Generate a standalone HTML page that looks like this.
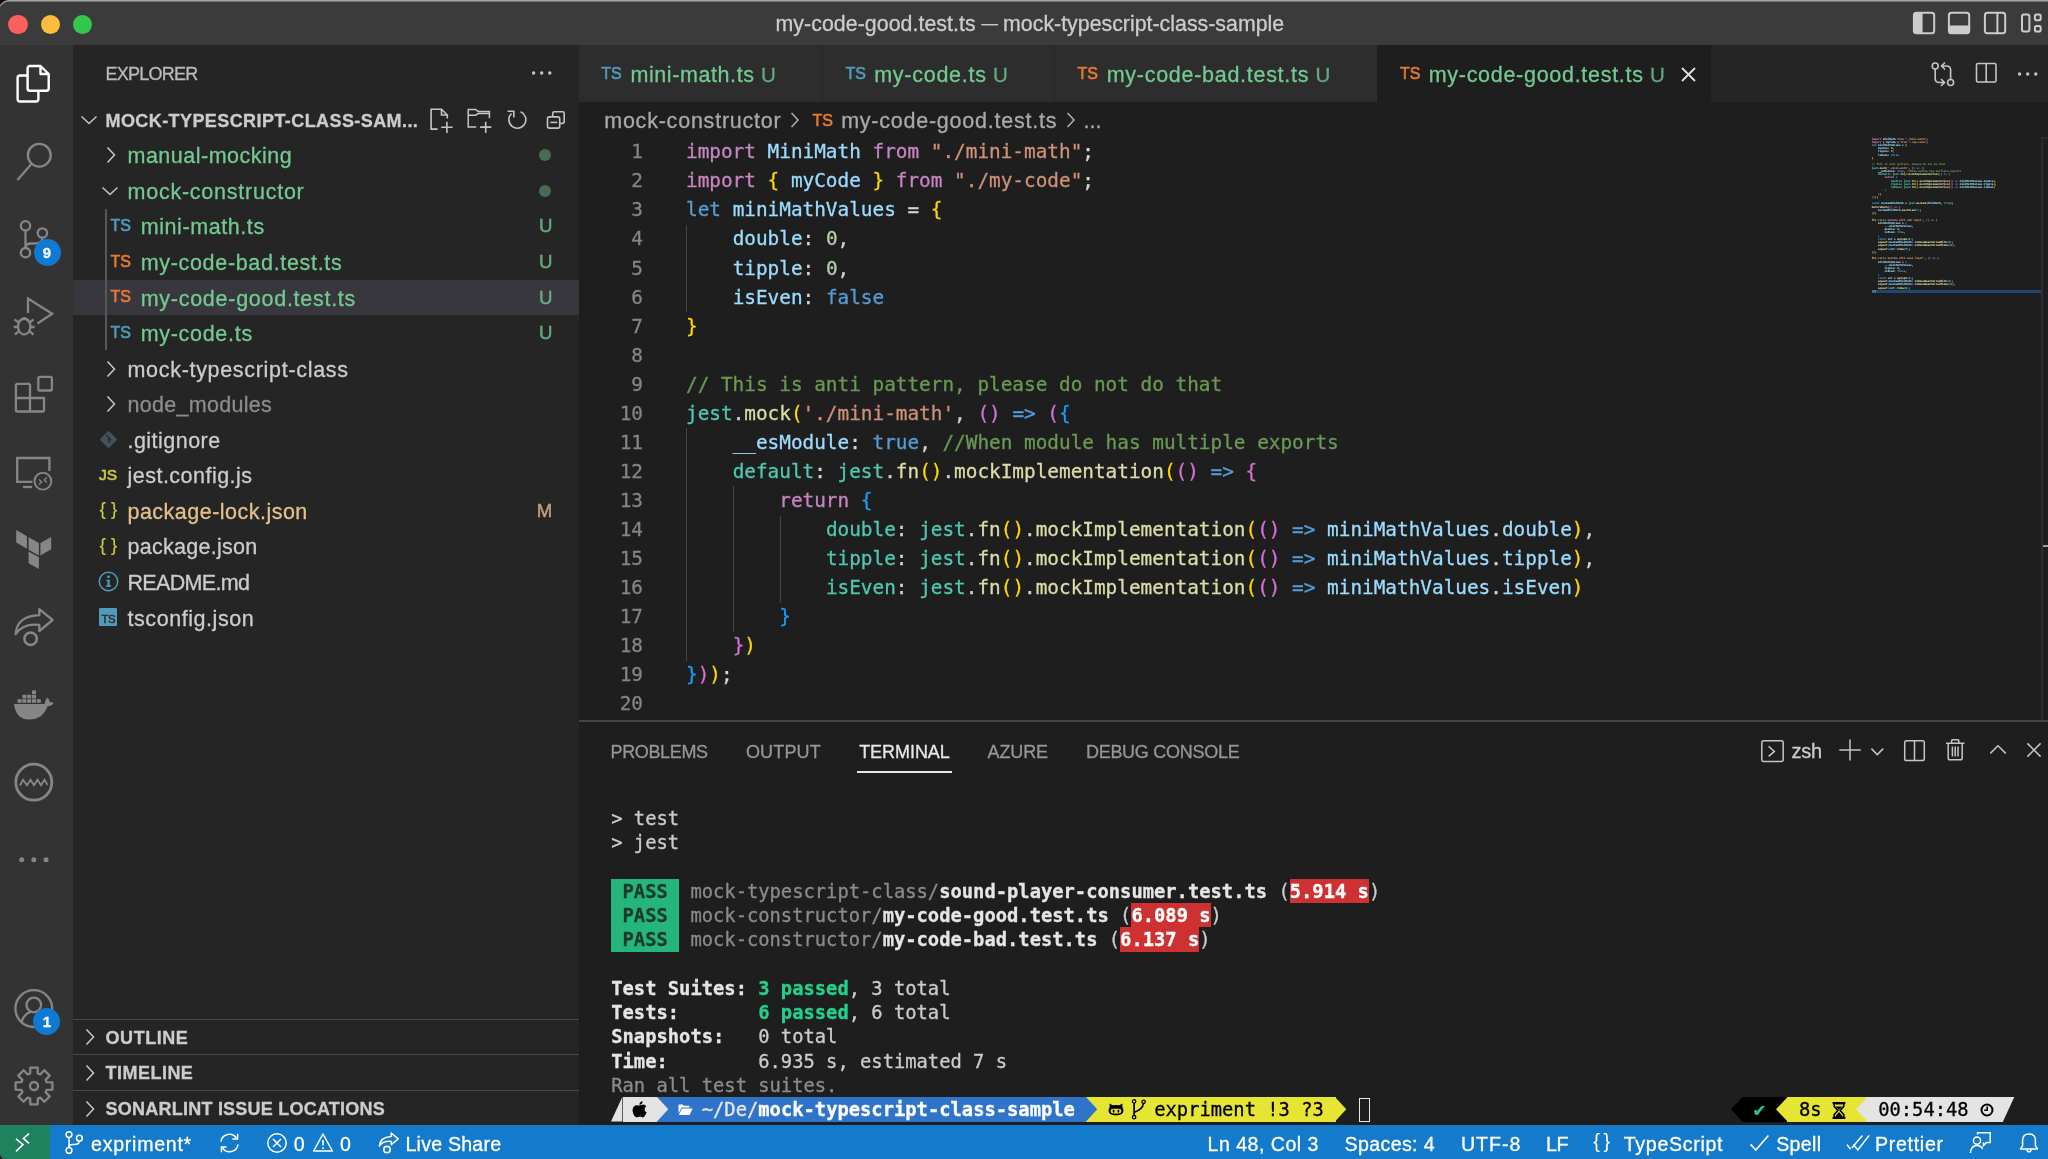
<!DOCTYPE html>
<html lang="en">
<head>
<meta charset="utf-8">
<title>my-code-good.test.ts — mock-typescript-class-sample</title>
<style>
*{box-sizing:border-box}
html,body{margin:0;padding:0}
body{width:2048px;height:1159px;overflow:hidden;background:#1e1e1e;position:relative;
 font-family:"Liberation Sans",sans-serif;color:#cccccc;-webkit-font-smoothing:antialiased}
.abs{position:absolute}
svg{display:block;overflow:visible}
#root{position:absolute;left:0;top:0;width:2048px;height:1159px;overflow:hidden;will-change:transform;-webkit-text-stroke:0.3px}
#code,.tline{-webkit-text-stroke:0.3px}
/* ---------- title bar ---------- */
#titlebar{position:absolute;left:-1.5px;top:0;width:2049.5px;height:45.4px;background:#3b3b3b;border-top-left-radius:10px;box-shadow:inset 0 1.5px 0.6px #a4a4a4}
#cornertl{position:absolute;left:0;top:0;width:14px;height:14px;background:#1a0b0b}
#cornerbl{position:absolute;left:0;top:1150px;width:9px;height:9px;background:#33231f}
#titlebar .topline{position:absolute;left:0;top:0;width:2048px;height:2px;background:linear-gradient(#8f8f8f,#5a5a5a)}
#title{position:absolute;left:1.5px;width:2048px;top:0;height:45px;line-height:49px;font-size:21.3px;color:#cccccc;white-space:nowrap}
#title span{position:absolute;top:0}
.tl{position:absolute;top:14.5px;width:19.4px;height:19.4px;border-radius:50%}
/* ---------- activity bar ---------- */
#activity{position:absolute;left:0;top:45px;width:73px;height:1081px;background:#333333}
#activity svg{position:absolute}
.badge{position:absolute;width:27px;height:27px;border-radius:50%;background:#0e7ad3;color:#fff;font-size:15px;font-weight:bold;text-align:center;line-height:27px}
/* ---------- sidebar ---------- */
#sidebar{position:absolute;left:73px;top:45px;width:506px;height:1081px;background:#252526}
.row{position:absolute;left:0;width:506px;height:36px;line-height:36px;font-size:21.5px;letter-spacing:.5px;white-space:nowrap;color:#cccccc}
.row .lbl{position:absolute;top:0}
.row .dec{position:absolute;top:-1px;font-size:18.6px;letter-spacing:0;opacity:.8;-webkit-text-stroke:0.5px}
.row .ts{position:absolute;top:-1.2px;font-size:16px;font-weight:normal;-webkit-text-stroke:0.6px;letter-spacing:0}
.g{color:#73c991}
.m{color:#e2c08d}
.ign{color:#8c8c8c}
.sect{position:absolute;left:0;width:506px;height:36px;border-top:1.6px solid #484848;line-height:37px;font-size:18px;font-weight:bold;letter-spacing:.4px;color:#cccccc}
.sect span{position:absolute;left:32px}
/* ---------- editor ---------- */
#tabs{position:absolute;left:579px;top:45px;width:1469px;height:56.8px;background:#252526}
.tab{position:absolute;top:0;height:56.8px;background:#2d2d2d;line-height:60.4px;font-size:21.5px;letter-spacing:.45px;color:#73c991;white-space:nowrap}
.tab.active{background:#1e1e1e}
.tab .ts{position:absolute;font-size:16px;font-weight:normal;-webkit-text-stroke:0.6px;letter-spacing:0;top:-0.7px}
.tab .lbl{position:absolute}
.blue{color:#519aba}
.orange{color:#e37933}
#crumbs{position:absolute;left:579px;top:101px;width:1469px;height:36px;line-height:40.4px;font-size:21.5px;letter-spacing:.35px;color:#a9a9a9;white-space:nowrap}
#crumbs span{position:absolute;top:0}
#code{position:absolute;left:579px;top:137px;width:1469px;height:583px;font-family:"DejaVu Sans Mono","Liberation Mono",monospace;font-size:19.37px;color:#d4d4d4}
.ln{position:absolute;left:0;width:64px;text-align:right;height:29px;line-height:29px;color:#858585;white-space:pre}
.cl{position:absolute;left:107px;height:29px;line-height:29px;white-space:pre}
.guide{position:absolute;width:1.2px;background:#444444}
.k{color:#c586c0}.v{color:#9cdcfe}.s{color:#ce9178}.b{color:#569cd6}.n{color:#b5cea8}.c{color:#6a9955}.f{color:#dcdcaa}.t{color:#4ec9b0}
.b1{color:#ffd700}.b2{color:#da70d6}.b3{color:#179fff}
/* ---------- panel ---------- */
#panel{position:absolute;left:579px;top:720px;width:1469px;height:406px;background:#1e1e1e}
#panel .pborder{position:absolute;left:0;top:0.3px;width:1469px;height:1.6px;background:#434343}
.ptab{position:absolute;top:14px;height:30px;line-height:30px;font-size:18px;letter-spacing:.1px;color:#969696;white-space:nowrap}
#term{position:absolute;left:32px;top:84px;font-family:"DejaVu Sans Mono","Liberation Mono",monospace;font-size:18.79px;color:#cccccc}
.tline{position:absolute;height:24.25px;line-height:24.25px;white-space:pre;font-family:"DejaVu Sans Mono","Liberation Mono",monospace;font-size:18.79px;color:#cccccc}
.dim{color:#8b8b8b}
.pass{background:#25b67b;color:#1e3a2c;font-weight:bold;display:inline-block;height:24.25px;vertical-align:top;margin-top:-.8px;padding-top:.8px}
.red{background:#cd3131;color:#ffffff;font-weight:bold;display:inline-block;height:24.25px;vertical-align:top;margin-top:-.8px;padding-top:.8px}
.bg{color:#23d18b;font-weight:bold}
.bw{color:#e5e5e5;font-weight:bold}
/* ---------- status bar ---------- */
#status{position:absolute;left:0;top:1124.7px;width:2048px;height:34.3px;background:#147acb;color:#ffffff;font-size:19.6px;line-height:38px;white-space:nowrap;border-bottom-left-radius:6px;overflow:hidden}
#status .it{position:absolute;top:0}
#remote{position:absolute;left:0;top:0;width:50.3px;height:35px;background:#1e825e}
</style>
</head>
<body>
<div id="root">

<!-- TITLE BAR -->
<div id="cornertl"></div><div id="cornerbl"></div>
<div id="titlebar">
  <div class="tl" style="left:9.7px;background:#fc605c"></div>
  <div class="tl" style="left:42px;background:#fdbc40"></div>
  <div class="tl" style="left:74.3px;background:#34c84a"></div>
  <div id="title"><span style="left:775.5px;letter-spacing:0.07px">my-code-good.test.ts</span><span style="left:981.6px;font-size:16.4px;top:-1px">—</span><span style="left:1003.1px;letter-spacing:0.02px">mock-typescript-class-sample</span></div>
<svg class="abs" style="left:1913.0px;top:10.5px" width="24" height="24" viewBox="0 0 24 24"><rect x="1.9" y="1.8" width="20.3" height="20.5" rx="2.6" fill="none" stroke="#cccccc" stroke-width="2"/><path d="M1.9 3.8 Q1.9 1.8 3.9 1.8 H10.6 V22.3 H3.9 Q1.9 22.3 1.9 20.3Z" fill="#cccccc"/></svg>
<svg class="abs" style="left:1948.5px;top:10.5px" width="24" height="24" viewBox="0 0 24 24"><rect x="1.9" y="1.8" width="20.3" height="20.5" rx="2.6" fill="none" stroke="#cccccc" stroke-width="2"/><path d="M1.9 14.6 H22.2 V20.3 Q22.2 22.3 20.2 22.3 H3.9 Q1.9 22.3 1.9 20.3Z" fill="#cccccc"/></svg>
<svg class="abs" style="left:1984.0px;top:10.5px" width="24" height="24" viewBox="0 0 24 24"><rect x="1.9" y="1.8" width="20.3" height="20.5" rx="2.6" fill="none" stroke="#cccccc" stroke-width="2"/><path d="M14.4 1.8 V22.3" stroke="#cccccc" stroke-width="2"/></svg>
<svg class="abs" style="left:2021.2px;top:10.5px" width="24" height="24" viewBox="0 0 24 24"><rect x="2" y="3.6" width="7.4" height="16.9" rx="2" fill="none" stroke="#cccccc" stroke-width="2"/><rect x="14.9" y="3.6" width="5.8" height="5.6" rx="1.8" fill="none" stroke="#cccccc" stroke-width="2"/><rect x="14.9" y="14.9" width="5.8" height="5.6" rx="1.8" fill="none" stroke="#cccccc" stroke-width="2"/></svg>
</div>

<!-- ACTIVITY BAR -->
<div id="activity">
<svg style="left:15px;top:18px" width="38" height="42" viewBox="0 0 38 42"><path d="M12.6 12.5 H5 Q2.6 12.5 2.6 15 V36 Q2.6 38.5 5 38.5 H21 Q23.4 38.5 23.4 36 V28.8" fill="none" stroke="#fff" stroke-width="2.4"/><path d="M25.5 3 H15 Q12.6 3 12.6 5.5 V25.5 Q12.6 27.8 15 27.8 H31.3 Q33.7 27.8 33.7 25.5 V11 Z M25.5 3 V11 H33.7" fill="none" stroke="#fff" stroke-width="2.4" stroke-linejoin="round"/></svg>
<svg style="left:14px;top:95px" width="42" height="44" viewBox="0 0 42 44"><circle cx="25.3" cy="15.2" r="11.4" fill="none" stroke="#868686" stroke-width="2.3"/><path d="M17.6 23.8 L3.4 40" stroke="#868686" stroke-width="2.3" fill="none"/></svg>
<svg style="left:14px;top:171px" width="42" height="46" viewBox="0 0 42 46"><circle cx="11.5" cy="9.8" r="4.7" fill="none" stroke="#868686" stroke-width="2.3"/><circle cx="11.5" cy="36.7" r="4.7" fill="none" stroke="#868686" stroke-width="2.3"/><circle cx="28.4" cy="17" r="4.7" fill="none" stroke="#868686" stroke-width="2.3"/><path d="M11.5 14.5 V32 M28.4 21.7 Q28.4 27.5 21 27.5 H17 Q11.5 27.5 11.5 32" fill="none" stroke="#868686" stroke-width="2.3"/></svg>
<div class="badge" style="left:33.5px;top:193.5px">9</div>
<svg style="left:12px;top:249px" width="44" height="46" viewBox="0 0 44 46"><path d="M16 19 V4.6 L40.2 19.8 L25.5 29.5" fill="none" stroke="#868686" stroke-width="2.3" stroke-linejoin="miter"/><ellipse cx="12.2" cy="32.6" rx="6.2" ry="7.8" fill="none" stroke="#868686" stroke-width="2.3"/><path d="M7 28.5 L2.5 25.5 M17.4 28.5 L21.5 25.5 M6.6 33 H1.8 M17.8 33 H22.6 M7 37 L3 40.6 M17.4 37 L21.4 40.6 M8 26.5 Q12.2 22 16.4 26.5" fill="none" stroke="#868686" stroke-width="2.3"/></svg>
<svg style="left:13px;top:329px" width="42" height="42" viewBox="0 0 42 42"><path d="M17 9.9 H4.4 Q2.9 9.9 2.9 11.4 V36 Q2.9 37.5 4.4 37.5 H29.5 Q31 37.5 31 36 V24 H2.9 M17 9.9 V37.5" fill="none" stroke="#868686" stroke-width="2.3"/><rect x="25.3" y="2.9" width="13.6" height="13.6" rx="1.5" fill="none" stroke="#868686" stroke-width="2.3"/></svg>
<svg style="left:14px;top:409px" width="42" height="40" viewBox="0 0 42 40"><path d="M18.5 27.9 H3.2 V4 H35.4 V17" fill="none" stroke="#868686" stroke-width="2.3"/><path d="M9 33 H18" stroke="#868686" stroke-width="2.3"/><circle cx="28.9" cy="27.2" r="8.4" fill="none" stroke="#868686" stroke-width="1.9"/><path d="M25 25.5 L27.6 28 L25 30.5 M32.8 23.6 L30.2 26.1 L32.8 28.6" fill="none" stroke="#868686" stroke-width="1.4"/></svg>
<svg style="left:0px;top:475px" width="60" height="56" viewBox="0 0 60 56"><path d="M16.2 10.1 L26.9 16.3 V28.7 L16.2 22.5Z M28.6 17.3 L38.9 23.1 V35.6 L28.6 29.8Z M40.4 23.1 L51.2 16.9 V29.3 L40.4 35.6Z M28.6 31.4 L38.9 37.2 V49 L28.6 43.2Z" fill="#868686"/></svg>
<svg style="left:12px;top:559px" width="44" height="46" viewBox="0 0 44 46"><path d="M27.3 5.2 L40.6 16 L27.3 27 V20.8 Q11 19 3.6 30 Q5 12 27.3 11.2 Z" fill="none" stroke="#868686" stroke-width="2.3" stroke-linejoin="round"/><circle cx="18.6" cy="34.8" r="6.2" fill="none" stroke="#868686" stroke-width="2.6"/></svg>
<svg style="left:12px;top:643px" width="44" height="36" viewBox="0 0 44 36"><path d="M2 16 H32.5 Q33 11.5 35.6 9.5 Q38 12 37.5 14.2 Q40 13.6 41.5 15 Q39.5 18.5 35.5 18.3 Q31 31.5 17 31.5 Q4 31.5 2 16Z" fill="#868686"/><g fill="#868686"><rect x="5.6" y="11.2" width="4" height="3.6"/><rect x="10.4" y="11.2" width="4" height="3.6"/><rect x="15.2" y="11.2" width="4" height="3.6"/><rect x="20" y="11.2" width="4" height="3.6"/><rect x="24.8" y="11.2" width="4" height="3.6"/><rect x="10.4" y="6.8" width="4" height="3.6"/><rect x="15.2" y="6.8" width="4" height="3.6"/><rect x="20" y="6.8" width="4" height="3.6"/><rect x="20" y="2.4" width="4" height="3.6"/></g></svg>
<svg style="left:12px;top:715px" width="44" height="44" viewBox="0 0 44 44"><circle cx="21.8" cy="22.2" r="18" fill="none" stroke="#868686" stroke-width="2.8"/><path d="M8 25.5 L11 19.8 L15 25.3 L18.5 19.8 L22 25.3 L25.5 19.8 L29 25.3 L32.5 19.8 L35.6 25" fill="none" stroke="#868686" stroke-width="1.8"/></svg>
<svg style="left:14px;top:807px" width="40" height="16" viewBox="0 0 40 16"><circle cx="7.7" cy="7.7" r="2.5" fill="#868686"/><circle cx="19.8" cy="7.7" r="2.5" fill="#868686"/><circle cx="32" cy="7.7" r="2.5" fill="#868686"/></svg>
<svg style="left:12px;top:941px" width="44" height="44" viewBox="0 0 44 44"><circle cx="21.8" cy="22.6" r="18.4" fill="none" stroke="#868686" stroke-width="2.3"/><circle cx="21.8" cy="19" r="7.3" fill="none" stroke="#868686" stroke-width="2.3"/><path d="M9.6 36 Q12 27.6 18.6 25.8 M25 25.8 Q31.6 27.6 34 36" fill="none" stroke="#868686" stroke-width="2.3"/></svg>
<div class="badge" style="left:33.4px;top:963.0px">1</div>
<svg style="left:11.8px;top:1019.2px" width="44" height="44" viewBox="0 0 44 44"><path d="M18.2 9.4 L18.3 3.6 L25.7 3.6 L25.8 9.4 L28.3 10.4 L32.4 6.3 L37.7 11.6 L33.6 15.7 L34.6 18.2 L40.4 18.3 L40.4 25.7 L34.6 25.8 L33.6 28.3 L37.7 32.4 L32.4 37.7 L28.3 33.6 L25.8 34.6 L25.7 40.4 L18.3 40.4 L18.2 34.6 L15.7 33.6 L11.6 37.7 L6.3 32.4 L10.4 28.3 L9.4 25.8 L3.6 25.7 L3.6 18.3 L9.4 18.2 L10.4 15.7 L6.3 11.6 L11.6 6.3 L15.7 10.4Z" fill="none" stroke="#868686" stroke-width="2.3" stroke-linejoin="round"/><circle cx="22" cy="22" r="4" fill="none" stroke="#868686" stroke-width="2.3"/></svg>
</div>

<!-- SIDEBAR -->
<div id="sidebar">
<div class="abs" style="left:32.5px;top:10px;height:36px;line-height:39.6px;font-size:18px;letter-spacing:-.75px;color:#bbbbbb">EXPLORER</div>
<svg class="abs" style="left:458px;top:25px" width="22" height="6" viewBox="0 0 22 6"><circle cx="2.6" cy="3" r="1.7" fill="#c5c5c5"/><circle cx="10.7" cy="3" r="1.7" fill="#c5c5c5"/><circle cx="18.8" cy="3" r="1.7" fill="#c5c5c5"/></svg>
<svg class="abs" style="left:6.0px;top:67.0px" width="20" height="16" viewBox="0 0 20 16"><path d="M2.5 4.5 L10 11.5 L17.5 4.5" fill="none" stroke="#c5c5c5" stroke-width="1.55"/></svg>
<div class="abs" style="left:32.5px;top:57px;height:36px;line-height:38px;font-size:18px;font-weight:bold;letter-spacing:.42px;color:#cccccc;white-space:nowrap">MOCK-TYPESCRIPT-CLASS-SAM...</div>
<svg class="abs" style="left:357px;top:62px" width="24" height="27" viewBox="0 0 24 27"><path d="M7.6 22.1 H1.1 V2.3 H11.5 L17.3 8 V11.6 M11.5 2.3 V8 H17.3" fill="none" stroke="#c5c5c5" stroke-width="1.6"/><path d="M11.2 20.2 H22.6 M16.9 14.8 V26" fill="none" stroke="#c5c5c5" stroke-width="1.6"/></svg>
<svg class="abs" style="left:394px;top:62px" width="26" height="27" viewBox="0 0 26 27"><path d="M9.2 20.1 H1.2 V2.4 H8.6 L11.2 4.4 H22.4 V11.2 M1.2 8.2 H8.6 L11.2 6.6 H22.4" fill="none" stroke="#c5c5c5" stroke-width="1.5"/><path d="M13.1 20.1 H24.3 M18.7 14.8 V26" fill="none" stroke="#c5c5c5" stroke-width="1.6"/></svg>
<svg class="abs" style="left:433px;top:63px" width="22" height="24" viewBox="0 0 22 24"><path d="M14.6 3.8 A8.5 8.5 0 1 1 5.4 5.6" fill="none" stroke="#c5c5c5" stroke-width="1.6"/><path d="M1.6 3.2 H7.8 V9.4" fill="none" stroke="#c5c5c5" stroke-width="1.6"/></svg>
<svg class="abs" style="left:472px;top:64px" width="22" height="22" viewBox="0 0 22 22"><path d="M7.7 7.4 V4.4 Q7.7 2.8 9.3 2.8 H17.6 Q19.2 2.8 19.2 4.4 V12.8 Q19.2 14.4 17.6 14.4 H15.2" fill="none" stroke="#c5c5c5" stroke-width="1.6"/><rect x="2.5" y="7.9" width="12.2" height="11.2" rx="1.8" fill="none" stroke="#c5c5c5" stroke-width="1.6"/><path d="M5.4 13.4 H12.2" stroke="#c5c5c5" stroke-width="1.6"/></svg>
<div class="row" style="top:92.2px;height:35.56px;line-height:38.96px;"><svg class="abs" style="left:29.5px;top:8.3px" width="16" height="20" viewBox="0 0 16 20"><path d="M4.5 2.5 L11.5 10 L4.5 17.5" fill="none" stroke="#c5c5c5" stroke-width="1.55"/></svg><span class="lbl g" style="left:54.5px;letter-spacing:0.50px">manual-mocking</span><div class="abs" style="left:465.70000000000005px;top:11.780000000000001px;width:12px;height:12px;border-radius:50%;background:#73c991;opacity:.43"></div></div>
<div class="row" style="top:127.8px;height:35.56px;line-height:38.96px;"><svg class="abs" style="left:27.0px;top:10.3px" width="20" height="16" viewBox="0 0 20 16"><path d="M2.5 4.5 L10 11.5 L17.5 4.5" fill="none" stroke="#c5c5c5" stroke-width="1.55"/></svg><span class="lbl g" style="left:54.5px;letter-spacing:0.76px">mock-constructor</span><div class="abs" style="left:465.70000000000005px;top:11.780000000000001px;width:12px;height:12px;border-radius:50%;background:#73c991;opacity:.43"></div></div>
<div class="row" style="top:163.3px;height:35.56px;line-height:38.96px;"><span class="ts blue" style="left:37.5px">TS</span><span class="lbl g" style="left:67.7px;letter-spacing:0.58px">mini-math.ts</span><span class="dec g" style="left:465.9px">U</span></div>
<div class="row" style="top:198.9px;height:35.56px;line-height:38.96px;"><span class="ts orange" style="left:37.5px">TS</span><span class="lbl g" style="left:67.7px;letter-spacing:0.68px">my-code-bad.test.ts</span><span class="dec g" style="left:465.9px">U</span></div>
<div class="row" style="top:234.5px;height:35.56px;line-height:38.96px;background:#37373d;"><span class="ts orange" style="left:37.5px">TS</span><span class="lbl g" style="left:67.7px;letter-spacing:0.73px">my-code-good.test.ts</span><span class="dec g" style="left:465.9px">U</span></div>
<div class="row" style="top:270.0px;height:35.56px;line-height:38.96px;"><span class="ts blue" style="left:37.5px">TS</span><span class="lbl g" style="left:67.7px;letter-spacing:0.70px">my-code.ts</span><span class="dec g" style="left:465.9px">U</span></div>
<div class="row" style="top:305.6px;height:35.56px;line-height:38.96px;"><svg class="abs" style="left:29.5px;top:8.3px" width="16" height="20" viewBox="0 0 16 20"><path d="M4.5 2.5 L11.5 10 L4.5 17.5" fill="none" stroke="#c5c5c5" stroke-width="1.55"/></svg><span class="lbl " style="left:54.5px;letter-spacing:0.69px">mock-typescript-class</span></div>
<div class="row" style="top:341.1px;height:35.56px;line-height:38.96px;"><svg class="abs" style="left:29.5px;top:8.3px" width="16" height="20" viewBox="0 0 16 20"><path d="M4.5 2.5 L11.5 10 L4.5 17.5" fill="none" stroke="#c5c5c5" stroke-width="1.55"/></svg><span class="lbl ign" style="left:54.5px;letter-spacing:0.29px">node_modules</span></div>
<div class="row" style="top:376.7px;height:35.56px;line-height:38.96px;"><svg class="abs" style="left:25.5px;top:8.280000000000001px" width="19" height="19" viewBox="0 0 19 19"><rect x="3.2" y="3.2" width="12.6" height="12.6" rx="1.5" transform="rotate(45 9.5 9.5)" fill="#41535b"/><path d="M7.2 5 L9.8 7.6 V13 M9.8 8 L12.2 10.4" stroke="#252526" stroke-width="1.3" fill="none"/></svg><span class="lbl " style="left:54.5px;letter-spacing:0.47px">.gitignore</span></div>
<div class="row" style="top:412.3px;height:35.56px;line-height:38.96px;"><span class="ts" style="left:26px;color:#cbcb41;font-size:15.5px;top:-1px">JS</span><span class="lbl " style="left:54.5px;letter-spacing:0.48px">jest.config.js</span></div>
<div class="row" style="top:447.8px;height:35.56px;line-height:38.96px;"><span class="ts" style="left:26.400000000000006px;color:#cbcb41;font-size:19px;font-weight:normal;top:-2.5px;letter-spacing:5.2px;-webkit-text-stroke:0.1px">{}</span><span class="lbl m" style="left:54.5px;letter-spacing:0.48px">package-lock.json</span><span class="dec m" style="left:463.79999999999995px">M</span></div>
<div class="row" style="top:483.4px;height:35.56px;line-height:38.96px;"><span class="ts" style="left:26.400000000000006px;color:#cbcb41;font-size:19px;font-weight:normal;top:-2.5px;letter-spacing:5.2px;-webkit-text-stroke:0.1px">{}</span><span class="lbl " style="left:54.5px;letter-spacing:0.27px">package.json</span></div>
<div class="row" style="top:518.9px;height:35.56px;line-height:38.96px;"><svg class="abs" style="left:25px;top:7.280000000000001px" width="21" height="21" viewBox="0 0 21 21"><circle cx="10.5" cy="10.5" r="9.2" fill="none" stroke="#519aba" stroke-width="1.5"/><rect x="9.5" y="8.8" width="2.2" height="6.8" fill="#519aba"/><rect x="8.3" y="8.8" width="3" height="1.4" fill="#519aba"/><rect x="8" y="14.4" width="5.2" height="1.4" fill="#519aba"/><circle cx="10.5" cy="5.8" r="1.4" fill="#519aba"/></svg><span class="lbl " style="left:54.5px;letter-spacing:-0.68px">README.md</span></div>
<div class="row" style="top:554.5px;height:35.56px;line-height:38.96px;"><div class="abs" style="left:26px;top:8.780000000000001px;width:17.6px;height:17.6px;background:#519aba;border-radius:1px;color:#252526;font-size:11.4px;font-weight:normal;letter-spacing:-.5px;line-height:23.5px;text-align:right;padding-right:1.6px;-webkit-text-stroke:0.35px">TS</div><span class="lbl " style="left:54.5px;letter-spacing:0.56px">tsconfig.json</span></div>
<div class="abs" style="left:32.2px;top:163.8px;width:1.5px;height:141.59999999999997px;background:#585858"></div>
<div class="sect" style="top:973.5px"><svg class="abs" style="left:8.5px;top:7.8px" width="16" height="20" viewBox="0 0 16 20"><path d="M4.5 2.5 L11.5 10 L4.5 17.5" fill="none" stroke="#c5c5c5" stroke-width="1.55"/></svg><span style="left:32.6px;letter-spacing:0.53px">OUTLINE</span></div>
<div class="sect" style="top:1009.1px"><svg class="abs" style="left:8.5px;top:7.8px" width="16" height="20" viewBox="0 0 16 20"><path d="M4.5 2.5 L11.5 10 L4.5 17.5" fill="none" stroke="#c5c5c5" stroke-width="1.55"/></svg><span style="left:32.6px;letter-spacing:0.47px">TIMELINE</span></div>
<div class="sect" style="top:1044.8px"><svg class="abs" style="left:8.5px;top:7.8px" width="16" height="20" viewBox="0 0 16 20"><path d="M4.5 2.5 L11.5 10 L4.5 17.5" fill="none" stroke="#c5c5c5" stroke-width="1.55"/></svg><span style="left:32.6px;letter-spacing:0.23px">SONARLINT ISSUE LOCATIONS</span></div>
</div>

<!-- EDITOR -->
<div id="tabs">
<div class="tab" style="left:0px;width:243px"><span class="ts blue" style="left:22.25px">TS</span><span class="lbl" style="left:51.45px;letter-spacing:0.59px">mini-math.ts</span><span class="lbl" style="left:181.9px;opacity:.8;letter-spacing:0;font-size:20.5px">U</span></div>
<div class="tab" style="left:244px;width:231.29999999999995px"><span class="ts blue" style="left:22.5px">TS</span><span class="lbl" style="left:51.2px;letter-spacing:0.74px">my-code.ts</span><span class="lbl" style="left:169.9px;opacity:.8;letter-spacing:0;font-size:20.5px">U</span></div>
<div class="tab" style="left:476.29999999999995px;width:321.45000000000005px"><span class="ts orange" style="left:22.200000000000045px">TS</span><span class="lbl" style="left:51.40000000000005px;letter-spacing:0.72px">my-code-bad.test.ts</span><span class="lbl" style="left:260.1px;opacity:.8;letter-spacing:0;font-size:20.5px">U</span></div>
<div class="tab active" style="left:798px;width:334px"><span class="ts orange" style="left:23px">TS</span><span class="lbl" style="left:51.7px;letter-spacing:0.71px">my-code-good.test.ts</span><span class="lbl" style="left:272.9px;opacity:.8;letter-spacing:0;font-size:20.5px">U</span><svg class="abs" style="left:303px;top:21px" width="17" height="17" viewBox="0 0 17 17"><path d="M2 2 L15 15 M15 2 L2 15" stroke="#e0e0e0" stroke-width="1.8"/></svg></div>
<svg class="abs" style="left:1351px;top:16px" width="26" height="27" viewBox="0 0 26 27"><circle cx="5.2" cy="5" r="3" fill="none" stroke="#c5c5c5" stroke-width="1.6"/><circle cx="20.6" cy="21.5" r="3" fill="none" stroke="#c5c5c5" stroke-width="1.6"/><path d="M5.2 8 V17.5 Q5.2 21.5 9.5 21.5 H14 M11 18 L14.5 21.5 L11 25" fill="none" stroke="#c5c5c5" stroke-width="1.6"/><path d="M20.6 18.5 V9 Q20.6 5 16.5 5 H12 M15 1.5 L11.5 5 L15 8.5" fill="none" stroke="#c5c5c5" stroke-width="1.6"/></svg>
<svg class="abs" style="left:1395.5px;top:16.700000000000003px" width="23" height="22" viewBox="0 0 23 22"><rect x="1.5" y="1.5" width="19.5" height="18.5" rx="1.5" fill="none" stroke="#c5c5c5" stroke-width="1.6"/><path d="M11.2 1.5 V20" stroke="#c5c5c5" stroke-width="1.6"/></svg>
<svg class="abs" style="left:1437.5px;top:25.700000000000003px" width="22" height="6" viewBox="0 0 22 6"><circle cx="2.6" cy="3" r="1.7" fill="#c5c5c5"/><circle cx="10.7" cy="3" r="1.7" fill="#c5c5c5"/><circle cx="18.8" cy="3" r="1.7" fill="#c5c5c5"/></svg>
</div>
<div id="crumbs">
<span style="left:25.2px;letter-spacing:0.78px">mock-constructor</span>
<svg class="abs" style="left:210.5px;top:10px" width="10" height="18" viewBox="0 0 10 18"><path d="M1.5 2 L8 9 L1.5 16" fill="none" stroke="#a9a9a9" stroke-width="1.6"/></svg>
<span style="left:233.5px;font-size:16px;font-weight:normal;-webkit-text-stroke:0.6px;letter-spacing:0;top:-0.5px" class="orange">TS</span>
<span style="left:262.2px;letter-spacing:0.76px">my-code-good.test.ts</span>
<svg class="abs" style="left:486.5px;top:10px" width="10" height="18" viewBox="0 0 10 18"><path d="M1.5 2 L8 9 L1.5 16" fill="none" stroke="#a9a9a9" stroke-width="1.6"/></svg>
<span style="left:504.5px;letter-spacing:0">...</span>
</div>
<div id="code">
<div class="ln" style="top:0.30px">1</div>
<div class="cl" style="top:0.30px"><span class="k">import</span> <span class="v">MiniMath</span> <span class="k">from</span> <span class="s">"./mini-math"</span>;</div>
<div class="ln" style="top:29.35px">2</div>
<div class="cl" style="top:29.35px"><span class="k">import</span> <span class="b1">{</span> <span class="v">myCode</span> <span class="b1">}</span> <span class="k">from</span> <span class="s">"./my-code"</span>;</div>
<div class="ln" style="top:58.40px">3</div>
<div class="cl" style="top:58.40px"><span class="b">let</span> <span class="v">miniMathValues</span> = <span class="b1">{</span></div>
<div class="ln" style="top:87.45px">4</div>
<div class="cl" style="top:87.45px">    <span class="v">double</span>: <span class="n">0</span>,</div>
<div class="ln" style="top:116.50px">5</div>
<div class="cl" style="top:116.50px">    <span class="v">tipple</span>: <span class="n">0</span>,</div>
<div class="ln" style="top:145.55px">6</div>
<div class="cl" style="top:145.55px">    <span class="v">isEven</span>: <span class="b">false</span></div>
<div class="ln" style="top:174.60px">7</div>
<div class="cl" style="top:174.60px"><span class="b1">}</span></div>
<div class="ln" style="top:203.65px">8</div>
<div class="ln" style="top:232.70px">9</div>
<div class="cl" style="top:232.70px"><span class="c">// This is anti pattern, please do not do that</span></div>
<div class="ln" style="top:261.75px">10</div>
<div class="cl" style="top:261.75px"><span class="t">jest</span>.<span class="f">mock</span><span class="b1">(</span><span class="s">'./mini-math'</span>, <span class="b2">(</span><span class="b2">)</span> <span class="b">=&gt;</span> <span class="b2">(</span><span class="b3">{</span></div>
<div class="ln" style="top:290.80px">11</div>
<div class="cl" style="top:290.80px">    <span class="v">__esModule</span>: <span class="b">true</span>, <span class="c">//When module has multiple exports</span></div>
<div class="ln" style="top:319.85px">12</div>
<div class="cl" style="top:319.85px">    <span class="t">default</span>: <span class="t">jest</span>.<span class="f">fn</span><span class="b1">(</span><span class="b1">)</span>.<span class="f">mockImplementation</span><span class="b1">(</span><span class="b2">(</span><span class="b2">)</span> <span class="b">=&gt;</span> <span class="b2">{</span></div>
<div class="ln" style="top:348.90px">13</div>
<div class="cl" style="top:348.90px">        <span class="k">return</span> <span class="b3">{</span></div>
<div class="ln" style="top:377.95px">14</div>
<div class="cl" style="top:377.95px">            <span class="t">double</span>: <span class="t">jest</span>.<span class="f">fn</span><span class="b1">(</span><span class="b1">)</span>.<span class="f">mockImplementation</span><span class="b1">(</span><span class="b2">(</span><span class="b2">)</span> <span class="b">=&gt;</span> <span class="v">miniMathValues</span>.<span class="v">double</span><span class="b1">)</span>,</div>
<div class="ln" style="top:407.00px">15</div>
<div class="cl" style="top:407.00px">            <span class="t">tipple</span>: <span class="t">jest</span>.<span class="f">fn</span><span class="b1">(</span><span class="b1">)</span>.<span class="f">mockImplementation</span><span class="b1">(</span><span class="b2">(</span><span class="b2">)</span> <span class="b">=&gt;</span> <span class="v">miniMathValues</span>.<span class="v">tipple</span><span class="b1">)</span>,</div>
<div class="ln" style="top:436.05px">16</div>
<div class="cl" style="top:436.05px">            <span class="t">isEven</span>: <span class="t">jest</span>.<span class="f">fn</span><span class="b1">(</span><span class="b1">)</span>.<span class="f">mockImplementation</span><span class="b1">(</span><span class="b2">(</span><span class="b2">)</span> <span class="b">=&gt;</span> <span class="v">miniMathValues</span>.<span class="v">isEven</span><span class="b1">)</span></div>
<div class="ln" style="top:465.10px">17</div>
<div class="cl" style="top:465.10px">        <span class="b3">}</span></div>
<div class="ln" style="top:494.15px">18</div>
<div class="cl" style="top:494.15px">    <span class="b2">}</span><span class="b1">)</span></div>
<div class="ln" style="top:523.20px">19</div>
<div class="cl" style="top:523.20px"><span class="b3">}</span><span class="b2">)</span><span class="b1">)</span>;</div>
<div class="ln" style="top:552.25px">20</div>
<div class="guide" style="left:107.2px;top:88.0px;height:87.2px"></div>
<div class="guide" style="left:107.2px;top:291.3px;height:232.4px"></div>
<div class="guide" style="left:153.8px;top:349.4px;height:145.3px"></div>
<div class="guide" style="left:200.5px;top:378.5px;height:87.1px"></div>
</div>

<div class="abs" style="left:1871.7px;top:289.5px;width:169.29999999999995px;height:3.4px;background:#1f4870"></div>
<div id="minimap" class="abs" style="left:1871.7px;top:137.5px;width:170px;height:160px;font-family:'DejaVu Sans Mono',monospace;font-size:2.674px;white-space:pre;color:#d4d4d4;-webkit-text-stroke:0.12px;font-weight:bold;opacity:.85"><div style="position:absolute;left:0;top:0.00px;height:3.24px;line-height:3.24px"><span class="k">import</span> <span class="v">MiniMath</span> <span class="k">from</span> <span class="s">"./mini-math"</span>;</div><div style="position:absolute;left:0;top:3.24px;height:3.24px;line-height:3.24px"><span class="k">import</span> <span class="b1">{</span> <span class="v">myCode</span> <span class="b1">}</span> <span class="k">from</span> <span class="s">"./my-code"</span>;</div><div style="position:absolute;left:0;top:6.48px;height:3.24px;line-height:3.24px"><span class="b">let</span> <span class="v">miniMathValues</span> = <span class="b1">{</span></div><div style="position:absolute;left:0;top:9.72px;height:3.24px;line-height:3.24px">    <span class="v">double</span>: <span class="n">0</span>,</div><div style="position:absolute;left:0;top:12.96px;height:3.24px;line-height:3.24px">    <span class="v">tipple</span>: <span class="n">0</span>,</div><div style="position:absolute;left:0;top:16.20px;height:3.24px;line-height:3.24px">    <span class="v">isEven</span>: <span class="b">false</span></div><div style="position:absolute;left:0;top:19.44px;height:3.24px;line-height:3.24px"><span class="b1">}</span></div><div style="position:absolute;left:0;top:22.68px;height:3.24px;line-height:3.24px"></div><div style="position:absolute;left:0;top:25.92px;height:3.24px;line-height:3.24px"><span class="c">// This is anti pattern, please do not do that</span></div><div style="position:absolute;left:0;top:29.16px;height:3.24px;line-height:3.24px"><span class="t">jest</span>.<span class="f">mock</span><span class="b1">(</span><span class="s">'./mini-math'</span>, <span class="b2">(</span><span class="b2">)</span> <span class="b">=&gt;</span> <span class="b2">(</span><span class="b3">{</span></div><div style="position:absolute;left:0;top:32.40px;height:3.24px;line-height:3.24px">    <span class="v">__esModule</span>: <span class="b">true</span>, <span class="c">//When module has multiple exports</span></div><div style="position:absolute;left:0;top:35.64px;height:3.24px;line-height:3.24px">    <span class="t">default</span>: <span class="t">jest</span>.<span class="f">fn</span><span class="b1">(</span><span class="b1">)</span>.<span class="f">mockImplementation</span><span class="b1">(</span><span class="b2">(</span><span class="b2">)</span> <span class="b">=&gt;</span> <span class="b2">{</span></div><div style="position:absolute;left:0;top:38.88px;height:3.24px;line-height:3.24px">        <span class="k">return</span> <span class="b3">{</span></div><div style="position:absolute;left:0;top:42.12px;height:3.24px;line-height:3.24px">            <span class="t">double</span>: <span class="t">jest</span>.<span class="f">fn</span><span class="b1">(</span><span class="b1">)</span>.<span class="f">mockImplementation</span><span class="b1">(</span><span class="b2">(</span><span class="b2">)</span> <span class="b">=&gt;</span> <span class="v">miniMathValues</span>.<span class="v">double</span><span class="b1">)</span>,</div><div style="position:absolute;left:0;top:45.36px;height:3.24px;line-height:3.24px">            <span class="t">tipple</span>: <span class="t">jest</span>.<span class="f">fn</span><span class="b1">(</span><span class="b1">)</span>.<span class="f">mockImplementation</span><span class="b1">(</span><span class="b2">(</span><span class="b2">)</span> <span class="b">=&gt;</span> <span class="v">miniMathValues</span>.<span class="v">tipple</span><span class="b1">)</span>,</div><div style="position:absolute;left:0;top:48.60px;height:3.24px;line-height:3.24px">            <span class="t">isEven</span>: <span class="t">jest</span>.<span class="f">fn</span><span class="b1">(</span><span class="b1">)</span>.<span class="f">mockImplementation</span><span class="b1">(</span><span class="b2">(</span><span class="b2">)</span> <span class="b">=&gt;</span> <span class="v">miniMathValues</span>.<span class="v">isEven</span><span class="b1">)</span></div><div style="position:absolute;left:0;top:51.84px;height:3.24px;line-height:3.24px">        <span class="b3">}</span></div><div style="position:absolute;left:0;top:55.08px;height:3.24px;line-height:3.24px">    <span class="b2">}</span><span class="b1">)</span></div><div style="position:absolute;left:0;top:58.32px;height:3.24px;line-height:3.24px"><span class="b3">}</span><span class="b2">)</span><span class="b1">)</span>;</div><div style="position:absolute;left:0;top:61.56px;height:3.24px;line-height:3.24px"></div><div style="position:absolute;left:0;top:64.80px;height:3.24px;line-height:3.24px"><span class="b">const</span> <span class="v">mockedMiniMath</span> = <span class="t">jest</span>.<span class="f">mocked</span><span class="b1">(</span><span class="v">MiniMath</span>, <span class="b">true</span><span class="b1">)</span>;</div><div style="position:absolute;left:0;top:68.04px;height:3.24px;line-height:3.24px"><span class="f">beforeEach</span><span class="b1">(</span><span class="b2">(</span><span class="b2">)</span> <span class="b">=&gt;</span> <span class="b2">{</span></div><div style="position:absolute;left:0;top:71.28px;height:3.24px;line-height:3.24px">    <span class="v">mockedMiniMath</span>.<span class="f">mockClear</span><span class="b3">(</span><span class="b3">)</span>;</div><div style="position:absolute;left:0;top:74.52px;height:3.24px;line-height:3.24px"><span class="b2">}</span><span class="b1">)</span>;</div><div style="position:absolute;left:0;top:77.76px;height:3.24px;line-height:3.24px"></div><div style="position:absolute;left:0;top:81.00px;height:3.24px;line-height:3.24px"><span class="f">it</span><span class="b1">(</span><span class="s">'calls myCode with odd input'</span>, <span class="b2">(</span><span class="b2">)</span> <span class="b">=&gt;</span> <span class="b2">{</span></div><div style="position:absolute;left:0;top:84.24px;height:3.24px;line-height:3.24px">    <span class="v">miniMathValues</span> = <span class="b3">{</span></div><div style="position:absolute;left:0;top:87.48px;height:3.24px;line-height:3.24px">        ...<span class="v">miniMathValues</span>,</div><div style="position:absolute;left:0;top:90.72px;height:3.24px;line-height:3.24px">        <span class="v">double</span>: <span class="n">6</span>,</div><div style="position:absolute;left:0;top:93.96px;height:3.24px;line-height:3.24px">        <span class="v">isEven</span>: <span class="b">true</span>,</div><div style="position:absolute;left:0;top:97.20px;height:3.24px;line-height:3.24px">    <span class="b3">}</span></div><div style="position:absolute;left:0;top:100.44px;height:3.24px;line-height:3.24px">    <span class="b">const</span> <span class="v">out</span> = <span class="f">myCode</span><span class="b3">(</span><span class="n">3</span><span class="b3">)</span>;</div><div style="position:absolute;left:0;top:103.68px;height:3.24px;line-height:3.24px">    <span class="f">expect</span><span class="b3">(</span><span class="v">mockedMiniMath</span><span class="b3">)</span>.<span class="f">toHaveBeenCalledWith</span><span class="b3">(</span><span class="n">3</span><span class="b3">)</span>;</div><div style="position:absolute;left:0;top:106.92px;height:3.24px;line-height:3.24px">    <span class="f">expect</span><span class="b3">(</span><span class="v">mockedMiniMath</span><span class="b3">)</span>.<span class="f">toHaveBeenCalledTimes</span><span class="b3">(</span><span class="n">1</span><span class="b3">)</span>;</div><div style="position:absolute;left:0;top:110.16px;height:3.24px;line-height:3.24px">    <span class="f">expect</span><span class="b3">(</span><span class="v">out</span><span class="b3">)</span>.<span class="f">toBe</span><span class="b3">(</span><span class="n">7</span><span class="b3">)</span>;</div><div style="position:absolute;left:0;top:113.40px;height:3.24px;line-height:3.24px"><span class="b2">}</span><span class="b1">)</span>;</div><div style="position:absolute;left:0;top:116.64px;height:3.24px;line-height:3.24px"></div><div style="position:absolute;left:0;top:119.88px;height:3.24px;line-height:3.24px"><span class="f">it</span><span class="b1">(</span><span class="s">'calls myCode with even input'</span>, <span class="b2">(</span><span class="b2">)</span> <span class="b">=&gt;</span> <span class="b2">{</span></div><div style="position:absolute;left:0;top:123.12px;height:3.24px;line-height:3.24px">    <span class="v">miniMathValues</span> = <span class="b3">{</span></div><div style="position:absolute;left:0;top:126.36px;height:3.24px;line-height:3.24px">        ...<span class="v">miniMathValues</span>,</div><div style="position:absolute;left:0;top:129.60px;height:3.24px;line-height:3.24px">        <span class="v">tipple</span>: <span class="n">6</span>,</div><div style="position:absolute;left:0;top:132.84px;height:3.24px;line-height:3.24px">        <span class="v">isEven</span>: <span class="b">false</span>,</div><div style="position:absolute;left:0;top:136.08px;height:3.24px;line-height:3.24px">    <span class="b3">}</span></div><div style="position:absolute;left:0;top:139.32px;height:3.24px;line-height:3.24px">    <span class="b">const</span> <span class="v">out</span> = <span class="f">myCode</span><span class="b3">(</span><span class="n">2</span><span class="b3">)</span>;</div><div style="position:absolute;left:0;top:142.56px;height:3.24px;line-height:3.24px">    <span class="f">expect</span><span class="b3">(</span><span class="v">mockedMiniMath</span><span class="b3">)</span>.<span class="f">toHaveBeenCalledWith</span><span class="b3">(</span><span class="n">2</span><span class="b3">)</span>;</div><div style="position:absolute;left:0;top:145.80px;height:3.24px;line-height:3.24px">    <span class="f">expect</span><span class="b3">(</span><span class="v">mockedMiniMath</span><span class="b3">)</span>.<span class="f">toHaveBeenCalledTimes</span><span class="b3">(</span><span class="n">1</span><span class="b3">)</span>;</div><div style="position:absolute;left:0;top:149.04px;height:3.24px;line-height:3.24px">    <span class="f">expect</span><span class="b3">(</span><span class="v">out</span><span class="b3">)</span>.<span class="f">toBe</span><span class="b3">(</span><span class="n">6</span><span class="b3">)</span>;</div><div style="position:absolute;left:0;top:152.28px;height:3.24px;line-height:3.24px"><span class="b2">}</span><span class="b1">)</span>;</div></div>
<div class="abs" style="left:2041.3px;top:137px;width:2px;height:583px;background:#2c2c2c"></div>
<div class="abs" style="left:2041.3px;top:137px;width:7px;height:1.5px;background:#2c2c2c"></div>
<div class="abs" style="left:2042.5px;top:544.5px;width:6px;height:2.5px;background:#a0a0a0"></div>

<!-- PANEL -->
<div id="panel">
<div class="pborder"></div>
<div class="ptab" style="left:31.5px;top:16.5px;letter-spacing:-0.35px;color:#969696">PROBLEMS</div>
<div class="ptab" style="left:166.9px;top:16.5px;letter-spacing:0.18px;color:#969696">OUTPUT</div>
<div class="ptab" style="left:280.2px;top:16.5px;letter-spacing:-0.06px;color:#e7e7e7">TERMINAL</div>
<div class="ptab" style="left:408.5px;top:16.5px;letter-spacing:-0.10px;color:#969696">AZURE</div>
<div class="ptab" style="left:506.9px;top:16.5px;letter-spacing:-0.26px;color:#969696">DEBUG CONSOLE</div>
<div class="abs" style="left:277.70000000000005px;top:51px;width:95.59999999999991px;height:1.6px;background:#e7e7e7"></div>
<svg class="abs" style="left:1181px;top:18.600000000000023px" width="25" height="25" viewBox="0 0 25 25"><rect x="1.8" y="1.8" width="21.4" height="20.8" rx="2" fill="none" stroke="#c5c5c5" stroke-width="1.5"/><path d="M8.6 7.4 L14.4 12.4 L8.6 17.4" fill="none" stroke="#c5c5c5" stroke-width="1.5"/></svg>
<div class="abs" style="left:1212.6px;top:15.5px;height:30px;line-height:30px;font-size:20px;letter-spacing:-0.31px;color:#cccccc">zsh</div>
<svg class="abs" style="left:1260px;top:19.200000000000045px" width="22" height="22" viewBox="0 0 22 22"><path d="M0.3 11 H21.8 M11 0.4 V21.6" stroke="#c5c5c5" stroke-width="1.5" fill="none"/></svg>
<svg class="abs" style="left:1290.5px;top:26px" width="15" height="11" viewBox="0 0 15 11"><path d="M1.4 2.6 L7.3 8.6 L13.2 2.6" stroke="#c5c5c5" stroke-width="1.5" fill="none"/></svg>
<svg class="abs" style="left:1324px;top:18.600000000000023px" width="23" height="23" viewBox="0 0 23 23"><rect x="1.7" y="1.7" width="19.6" height="19.8" rx="1.8" fill="none" stroke="#c5c5c5" stroke-width="1.5"/><path d="M11.5 1.7 V21.5" stroke="#c5c5c5" stroke-width="1.5"/></svg>
<svg class="abs" style="left:1366px;top:18.299999999999955px" width="21" height="24" viewBox="0 0 21 24"><path d="M1 5.2 H19.4 M6.6 5 V2.8 Q6.6 1.8 7.6 1.8 H12.8 Q13.8 1.8 13.8 2.8 V5 M3.2 5.4 V20 Q3.2 21.8 5 21.8 H15.4 Q17.2 21.8 17.2 20 V5.4 M7.4 8.4 V18.4 M10.2 8.4 V18.4 M13 8.4 V18.4" fill="none" stroke="#c5c5c5" stroke-width="1.5"/></svg>
<svg class="abs" style="left:1410px;top:23px" width="18" height="13" viewBox="0 0 18 13"><path d="M1.3 10.4 L9 2.8 L16.7 10.4" stroke="#c5c5c5" stroke-width="1.5" fill="none"/></svg>
<svg class="abs" style="left:1446.5px;top:22.299999999999955px" width="16" height="16" viewBox="0 0 16 16"><path d="M1.4 1.4 L14.6 14.6 M14.6 1.4 L1.4 14.6" stroke="#c5c5c5" stroke-width="1.5" fill="none"/></svg>
<div class="tline" style="left:32.25px;top:87.00px">&gt; test</div>
<div class="tline" style="left:32.25px;top:111.25px">&gt; jest</div>
<div class="tline" style="left:32.25px;top:159.75px"><span class="pass"> PASS </span> <span class="dim">mock-typescript-class/</span><span class="bw">sound-player-consumer.test.ts</span> (<span class="red">5.914 s</span>)</div>
<div class="tline" style="left:32.25px;top:184.00px"><span class="pass"> PASS </span> <span class="dim">mock-constructor/</span><span class="bw">my-code-good.test.ts</span> (<span class="red">6.089 s</span>)</div>
<div class="tline" style="left:32.25px;top:208.25px"><span class="pass"> PASS </span> <span class="dim">mock-constructor/</span><span class="bw">my-code-bad.test.ts</span> (<span class="red">6.137 s</span>)</div>
<div class="tline" style="left:32.25px;top:256.75px"><span class="bw">Test Suites: </span><span class="bg">3 passed</span>, 3 total</div>
<div class="tline" style="left:32.25px;top:281.00px"><span class="bw">Tests:       </span><span class="bg">6 passed</span>, 6 total</div>
<div class="tline" style="left:32.25px;top:305.25px"><span class="bw">Snapshots:   </span>0 total</div>
<div class="tline" style="left:32.25px;top:329.50px"><span class="bw">Time:</span>        6.935 s, estimated 7 s</div>
<div class="tline" style="left:32.25px;top:353.75px"><span class="dim">Ran all test suites.</span></div>
<svg class="abs" style="left:32.25px;top:377.4000000000001px" width="11.312" height="24.6" viewBox="0 0 11.312 24.6"><polygon points="0,24.6 11.312,0 11.312,24.6" fill="#e4e4e4"/></svg>
<div class="abs" style="left:44.13px;top:377.4000000000001px;width:33.77px;height:24.6px;background:#e4e4e4"></div>
<div class="abs" style="left:77.50px;top:377.4000000000001px;width:430.26px;height:24.6px;background:#2f74c9"></div>
<svg class="abs" style="left:77.50px;top:377.4000000000001px" width="11.312" height="24.6" viewBox="0 0 11.312 24.6"><polygon points="0,0 11.312,12.3 0,24.6" fill="#e4e4e4"/></svg>
<div class="abs" style="left:507.35px;top:377.4000000000001px;width:249.26px;height:24.6px;background:#e6e533"></div>
<svg class="abs" style="left:507.35px;top:377.4000000000001px" width="11.312" height="24.6" viewBox="0 0 11.312 24.6"><polygon points="0,0 11.312,12.3 0,24.6" fill="#2f74c9"/></svg>
<svg class="abs" style="left:756.22px;top:377.4000000000001px" width="11.312" height="24.6" viewBox="0 0 11.312 24.6"><polygon points="0,0 11.312,12.3 0,24.6" fill="#e6e533"/></svg>
<svg class="abs" style="left:53.37px;top:380.6000000000001px" width="15" height="18" viewBox="0 0 15 18"><path d="M7.6 4.6 C8.6 4.6 9.6 3.6 11 3.6 C12.4 3.6 13.6 4.4 14.2 5.4 C12 6.8 12.2 10.2 14.6 11.2 C14 13 12.4 16.4 10.6 16.4 C9.6 16.4 9 15.8 7.8 15.8 C6.6 15.8 5.8 16.4 5 16.4 C3 16.4 0.6 12.6 0.6 9.4 C0.6 6 2.8 4.2 4.8 4.2 C6 4.2 6.8 4.6 7.6 4.6 Z M7.4 3.8 C7.2 1.8 9 0.2 10.6 0.2 C10.8 2.2 9.2 3.8 7.4 3.8Z" fill="#000"/></svg>
<svg class="abs" style="left:99.12px;top:383.80000000000007px" width="15" height="12" viewBox="0 0 15 12"><path d="M0.5 1.2 Q0.5 0.4 1.3 0.4 H4.6 L5.8 1.8 H10.6 Q11.4 1.8 11.4 2.6 V3.6 H3.6 L0.5 9.6 Z" fill="#fff"/><path d="M4 4.6 H14.6 L11.6 11 H0.8 Z" fill="#fff"/></svg>
<div class="tline" style="left:122.75px;top:377.60px;height:24.6px;line-height:24.6px;color:#e8e8e8;">~/De/</div>
<div class="tline" style="left:179.31px;top:377.60px;height:24.6px;line-height:24.6px;color:#ffffff;font-weight:bold;">mock-typescript-class-sample</div>
<svg class="abs" style="left:528.58px;top:383.0000000000001px" width="16" height="13" viewBox="0 0 16 13"><path d="M1.6 0.4 L4.6 2.2 Q8 1.6 11.4 2.2 L14.4 0.4 V4.2 Q15.6 6 15.4 8 Q15 12.4 8 12.4 Q1 12.4 0.6 8 Q0.4 6 1.6 4.2Z" fill="#000"/><rect x="2.6" y="5.8" width="10.8" height="4.6" rx="2.3" fill="#e6e533"/><ellipse cx="5.6" cy="8.1" rx="1" ry="1.6" fill="#000"/><ellipse cx="10.4" cy="8.1" rx="1" ry="1.6" fill="#000"/></svg>
<svg class="abs" style="left:551.60px;top:379.4000000000001px" width="16" height="21" viewBox="0 0 16 21"><circle cx="3.1" cy="2.4" r="1.7" fill="none" stroke="#000" stroke-width="1.3"/><circle cx="3.1" cy="18.2" r="1.7" fill="none" stroke="#000" stroke-width="1.3"/><circle cx="12.6" cy="2.8" r="1.7" fill="none" stroke="#000" stroke-width="1.3"/><path d="M3.1 4.2 V16.4 M12.4 4.6 Q11.6 10.4 3.3 13.2" fill="none" stroke="#000" stroke-width="1.7"/></svg>
<div class="tline" style="left:575.23px;top:377.60px;height:24.6px;line-height:24.6px;color:#000000;">expriment !3 ?3</div>
<div class="abs" style="left:780.14px;top:377.6000000000001px;width:11.1px;height:24.200000000000003px;border:1.5px solid #e6e6e6"></div>
<svg class="abs" style="left:1152.14px;top:377.4000000000001px" width="11.312" height="24.6" viewBox="0 0 11.312 24.6"><polygon points="11.312,0 0,12.3 11.312,24.6" fill="#000000"/></svg>
<div class="abs" style="left:1163.22px;top:377.4000000000001px;width:45.87px;height:24.6px;background:#000000"></div>
<div class="abs" style="left:1208.47px;top:377.4000000000001px;width:79.81px;height:24.6px;background:#e6e533"></div>
<svg class="abs" style="left:1197.39px;top:377.4000000000001px" width="11.312" height="24.6" viewBox="0 0 11.312 24.6"><polygon points="11.612,0 0,12.3 11.612,24.6" fill="#e6e533"/></svg>
<svg class="abs" style="left:1276.57px;top:377.4000000000001px" width="11.312" height="24.6" viewBox="0 0 11.312 24.6"><polygon points="11.612,0 0,12.3 11.612,24.6" fill="#e4e4e4"/></svg>
<div class="abs" style="left:1286.75px;top:377.4000000000001px;width:137.28px;height:24.6px;background:#e4e4e4"></div>
<svg class="abs" style="left:1423.63px;top:377.4000000000001px" width="11.312" height="24.6" viewBox="0 0 11.312 24.6"><polygon points="0,0 11.312,0 0,24.6" fill="#e4e4e4"/></svg>
<div class="tline" style="left:1174.76px;top:377.60px;height:24.6px;line-height:24.6px;color:#23c984;">✔</div>
<div class="tline" style="left:1220.01px;top:377.60px;height:24.6px;line-height:24.6px;color:#000000;">8s</div>
<svg class="abs" style="left:1252.85px;top:381.6000000000001px" width="14" height="17" viewBox="0 0 14 17"><path d="M0.6 1.2 H13.4 M0.6 15.8 H13.4" stroke="#000" stroke-width="2.2"/><path d="M2.2 1.4 V4.4 L5.8 8.5 L2.2 12.6 V15.6 H11.8 V12.6 L8.2 8.5 L11.8 4.4 V1.4 Z" fill="none" stroke="#000" stroke-width="1.6"/><path d="M3 15 L7 10 L11 15Z M3.6 4.4 H10.4 L7 8Z" fill="#000"/></svg>
<div class="tline" style="left:1299.19px;top:377.60px;height:24.6px;line-height:24.6px;color:#000000;">00:54:48</div>
<svg class="abs" style="left:1400.80px;top:382.80000000000007px" width="14" height="14" viewBox="0 0 14 14"><circle cx="7" cy="7" r="5.5" fill="none" stroke="#000" stroke-width="2"/><path d="M7.2 3.4 V7.2 H4.2" fill="none" stroke="#000" stroke-width="1.6"/></svg>
</div>

<!-- STATUS BAR -->
<div id="status">
  <div id="remote"></div>
<svg class="abs" style="left:14px;top:7.3px" width="18" height="22" viewBox="0 0 18 22"><path d="M2 6.8 L9 12.6 L2 19.4 M15 1.6 L9.4 6.4 L15 11.4" fill="none" stroke="#ffffff" stroke-width="1.6"/></svg>
<svg class="abs" style="left:63.5px;top:5.8px" width="21" height="25" viewBox="0 0 21 25"><circle cx="5" cy="4.6" r="2.9" fill="none" stroke="#ffffff" stroke-width="1.5"/><circle cx="5" cy="20.4" r="2.9" fill="none" stroke="#ffffff" stroke-width="1.5"/><circle cx="15.4" cy="8.2" r="2.9" fill="none" stroke="#ffffff" stroke-width="1.5"/><path d="M5 7.5 V17.5 M15.4 11.1 Q15.4 14.6 10.5 14.6 H8.5 Q5 14.6 5 17.5" fill="none" stroke="#ffffff" stroke-width="1.5"/></svg>
<div class="it" style="left:91.1px;letter-spacing:0.72px">expriment*</div>
<svg class="abs" style="left:216.5px;top:7.8px" width="25" height="22" viewBox="0 0 25 22"><path d="M4 9.6 A8.4 8.4 0 0 1 19.6 6.4 M21 12.4 A8.4 8.4 0 0 1 5.4 15.6" fill="none" stroke="#ffffff" stroke-width="1.5"/><path d="M20.6 1.8 V7 H15.4 M4.4 20.2 V15 H9.6" fill="none" stroke="#ffffff" stroke-width="1.5"/></svg>
<svg class="abs" style="left:266px;top:7.6px" width="22" height="22" viewBox="0 0 22 22"><circle cx="11" cy="11" r="9.2" fill="none" stroke="#ffffff" stroke-width="1.5"/><path d="M7 7 L15 15 M15 7 L7 15" stroke="#ffffff" stroke-width="1.5"/></svg>
<div class="it" style="left:293.8px;letter-spacing:0.80px">0</div>
<svg class="abs" style="left:312px;top:7.8px" width="22" height="21" viewBox="0 0 22 21"><path d="M11 2 L20.4 19 H1.6 Z" fill="none" stroke="#ffffff" stroke-width="1.5" stroke-linejoin="round"/><path d="M11 8 V13.6 M11 15.2 V17" stroke="#ffffff" stroke-width="1.6"/></svg>
<div class="it" style="left:340.0px;letter-spacing:1.10px">0</div>
<svg class="abs" style="left:378px;top:6.8px" width="22" height="24" viewBox="0 0 22 24"><path d="M13.2 2 L20.2 7.8 L13.2 13.6 V10.4 Q5 9.6 1.4 15 Q2 6 13.2 5.4 Z" fill="none" stroke="#ffffff" stroke-width="1.5" stroke-linejoin="round"/><circle cx="9" cy="18.6" r="3.2" fill="none" stroke="#ffffff" stroke-width="1.6"/></svg>
<div class="it" style="left:405.5px;letter-spacing:0.21px">Live Share</div>
<div class="it" style="left:1207.5px;letter-spacing:0.48px">Ln 48, Col 3</div>
<div class="it" style="left:1344.6px;letter-spacing:0.35px">Spaces: 4</div>
<div class="it" style="left:1460.9px;letter-spacing:0.99px">UTF-8</div>
<div class="it" style="left:1546.0px;letter-spacing:-0.47px">LF</div>
<div class="it" style="left:1593.2px;font-size:20px;letter-spacing:3.6px;top:-2.4px;-webkit-text-stroke:0">{}</div>
<div class="it" style="left:1623.8px;letter-spacing:0.68px">TypeScript</div>
<svg class="abs" style="left:1749px;top:8.3px" width="21" height="20" viewBox="0 0 21 20"><path d="M1.6 11.4 L6.8 17 L19.4 2.4" fill="none" stroke="#ffffff" stroke-width="1.6"/></svg>
<div class="it" style="left:1776.2px;letter-spacing:0.35px">Spell</div>
<svg class="abs" style="left:1846px;top:8.3px" width="25" height="20" viewBox="0 0 25 20"><path d="M1 11.6 L4.6 16.2 M7.4 11.4 L11.8 17 L23.2 2.4 M5.8 15 L16.4 2.4" fill="none" stroke="#ffffff" stroke-width="1.5"/></svg>
<div class="it" style="left:1875.1px;letter-spacing:0.68px">Prettier</div>
<svg class="abs" style="left:1969px;top:6.8px" width="23" height="24" viewBox="0 0 23 24"><circle cx="8" cy="9.6" r="3.6" fill="none" stroke="#ffffff" stroke-width="1.5"/><path d="M1.4 22 Q2 14.6 8 14.6 Q12 14.6 13.6 18" fill="none" stroke="#ffffff" stroke-width="1.5"/><path d="M8.6 3.4 V1.8 H21.2 V11.6 H17.4 L14.4 14.6 V11.6" fill="none" stroke="#ffffff" stroke-width="1.5"/></svg>
<svg class="abs" style="left:2018.5px;top:6.8px" width="20" height="24" viewBox="0 0 20 24"><path d="M1.6 18 H18.4 L16.4 14.6 V9.4 Q16.4 3 10 3 Q3.6 3 3.6 9.4 V14.6 Z" fill="none" stroke="#ffffff" stroke-width="1.5" stroke-linejoin="round"/><path d="M8 18.4 Q8 20.8 10 20.8 Q12 20.8 12 18.4" fill="none" stroke="#ffffff" stroke-width="1.5"/></svg>
</div>

</div>
</body>
</html>
